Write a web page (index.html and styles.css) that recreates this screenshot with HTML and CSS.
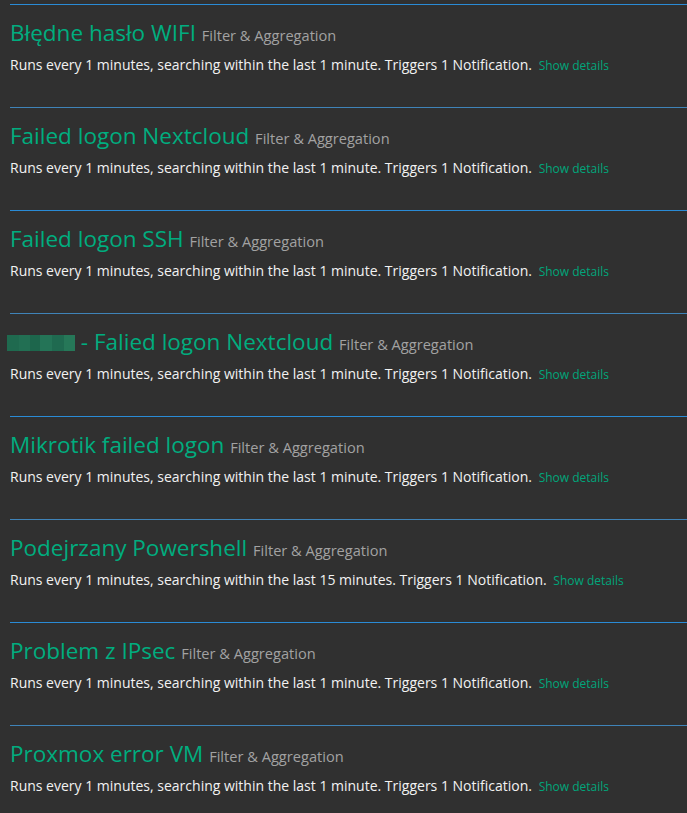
FILE: index.html
```html
<!DOCTYPE html>
<html>
<head>
<meta charset="utf-8">
<link rel="stylesheet" href="styles.css">
</head>
<body>
<div class="list">
  <div class="item bright">
    <h2 class="title">Błędne hasło WIFI <small class="type">Filter &amp; Aggregation</small></h2>
    <p class="desc">Runs every 1 minutes, searching within the last 1 minute. Triggers 1 Notification. <a class="details">Show details</a></p>
  </div>
  <div class="item dim">
    <h2 class="title">Failed logon Nextcloud <small class="type">Filter &amp; Aggregation</small></h2>
    <p class="desc">Runs every 1 minutes, searching within the last 1 minute. Triggers 1 Notification. <a class="details">Show details</a></p>
  </div>
  <div class="item bright">
    <h2 class="title">Failed logon SSH <small class="type">Filter &amp; Aggregation</small></h2>
    <p class="desc">Runs every 1 minutes, searching within the last 1 minute. Triggers 1 Notification. <a class="details">Show details</a></p>
  </div>
  <div class="item dim">
    <h2 class="title"><span class="blur"><i class="c1"></i><i class="c2"></i><i class="c3"></i><i class="c4"></i><i class="c5"></i><i class="c6"></i></span> - Falied logon Nextcloud <small class="type">Filter &amp; Aggregation</small></h2>
    <p class="desc">Runs every 1 minutes, searching within the last 1 minute. Triggers 1 Notification. <a class="details">Show details</a></p>
  </div>
  <div class="item bright">
    <h2 class="title">Mikrotik failed logon <small class="type">Filter &amp; Aggregation</small></h2>
    <p class="desc">Runs every 1 minutes, searching within the last 1 minute. Triggers 1 Notification. <a class="details">Show details</a></p>
  </div>
  <div class="item dim">
    <h2 class="title">Podejrzany Powershell <small class="type">Filter &amp; Aggregation</small></h2>
    <p class="desc">Runs every 1 minutes, searching within the last 15 minutes. Triggers 1 Notification. <a class="details">Show details</a></p>
  </div>
  <div class="item bright">
    <h2 class="title">Problem z IPsec <small class="type">Filter &amp; Aggregation</small></h2>
    <p class="desc">Runs every 1 minutes, searching within the last 1 minute. Triggers 1 Notification. <a class="details">Show details</a></p>
  </div>
  <div class="item dim">
    <h2 class="title">Proxmox error VM <small class="type">Filter &amp; Aggregation</small></h2>
    <p class="desc">Runs every 1 minutes, searching within the last 1 minute. Triggers 1 Notification. <a class="details">Show details</a></p>
  </div>
</div>
</body>
</html>
```
FILE: styles.css
```css
html, body {
  margin: 0;
  padding: 0;
  background: #303030;
}
body {
  font-family: "Open Sans", "Noto Sans", sans-serif;
  color: #f2f2f2;
  padding-top: 4px;
}
.list {
  padding-left: 10px;
}
.item {
  box-sizing: border-box;
  height: 103px;
  border-top: 1px solid #2a8bd6;
  padding-top: 13px;
}
.item.dim {
  border-top-color: #3f83b8;
}
.title {
  margin: 0;
  font-size: 22.5px;
  line-height: 30px;
  font-weight: 400;
  color: #00ad7f;
  white-space: nowrap;
}
.type {
  font-size: 65%;
  color: #a2a2a2;
}
.desc {
  margin: 5px 0 0;
  font-size: 14px;
  line-height: 20px;
  color: #f2f2f2;
  white-space: nowrap;
}
.details {
  font-size: 12px;
  color: #00a67b;
  margin-left: 3px;
}
.blur {
  display: inline-flex;
  vertical-align: -1px;
  margin-left: -3px;
  height: 16px;
}
.blur i {
  display: block;
  height: 16px;
}
.blur .c1 { width: 12px; background: #1f6a4f; }
.blur .c2 { width: 11px; background: #226f53; }
.blur .c3 { width: 10px; background: #1d664c; }
.blur .c4 { width: 12px; background: #247457; }
.blur .c5 { width: 12px; background: #1f6a50; }
.blur .c6 { width: 11px; background: #267758; }
```
